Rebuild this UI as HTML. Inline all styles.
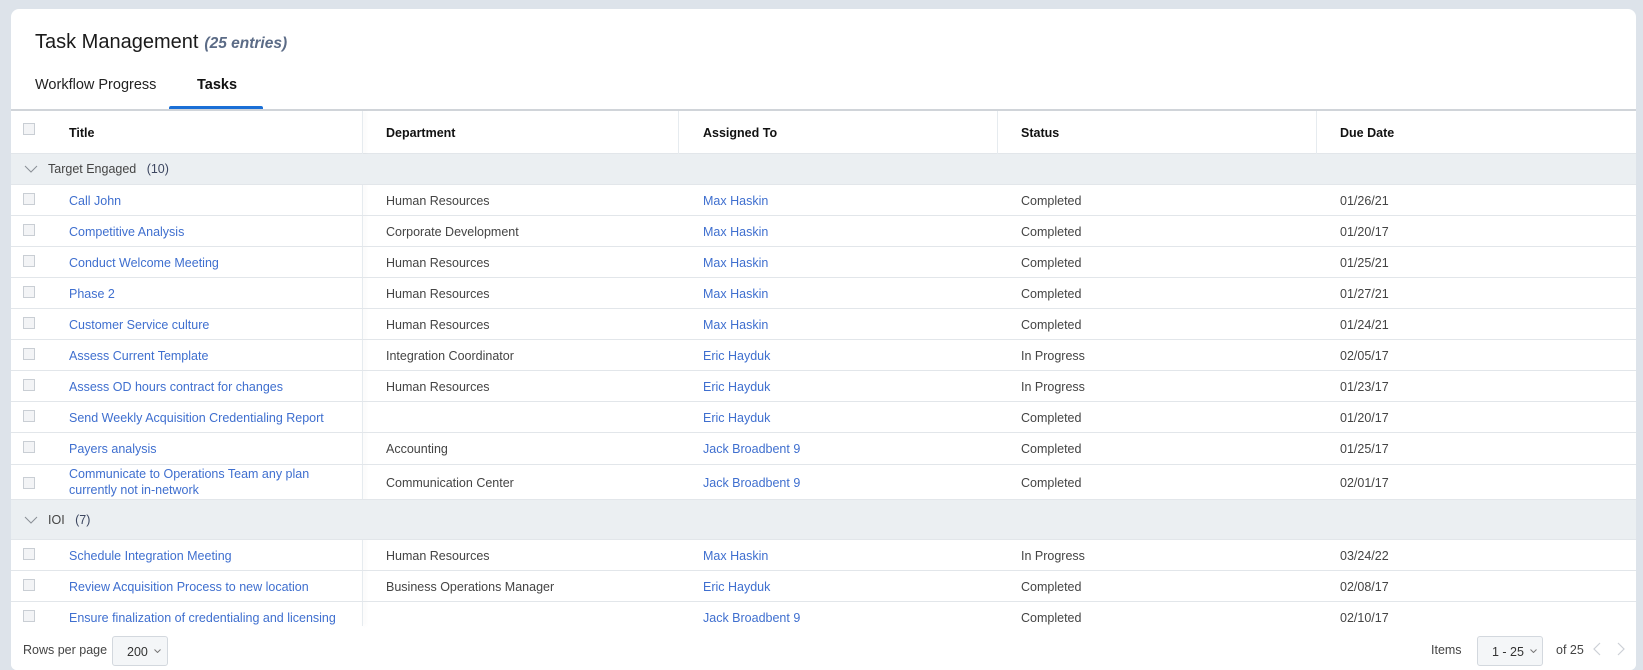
<!DOCTYPE html>
<html><head><meta charset="utf-8"><style>
*{margin:0;padding:0;box-sizing:border-box}
body{width:1643px;height:670px;background:#dde3ea;font-family:"Liberation Sans",Arial,sans-serif;position:relative;overflow:hidden;color:#444}
.card{position:absolute;left:11px;top:9px;width:1625px;height:661px;background:#fff;border-radius:8px 8px 6px 6px;overflow:hidden}
.abs{position:absolute}
.h1{left:24px;top:22px;font-size:20px;color:#1a1a1a}
.h1 i{font-size:15.5px;color:#5b6b86;font-weight:bold;margin-left:6px}
.tab{top:68px;font-size:14.5px;color:#222}
.ul{left:158px;top:97px;width:94px;height:4px;background:#1a6fd6;border-radius:2px 2px 0 0}
.hl{left:0;top:100px;width:1625px;height:2px;background:#d0d4d9}
.row{position:absolute;left:0;width:1625px;border-bottom:1px solid #e2e6ea;font-size:12.5px}
.row span{position:absolute}
.cb{position:absolute;left:12px;width:12px;height:12px;border:1px solid #c9ced4;background:#f3f4f6}
.c1{left:58px}.c2{left:375px}.c3{left:692px}.c4{left:1010px}.c5{left:1329px}
.lnk{color:#3f6fcf}
.grp{background:#ebeff2}
.vb{position:absolute;top:102px;width:1px;background:#e6ebef}
.hd{font-weight:bold;color:#111;font-size:12.5px}
.foot{position:absolute;left:0;top:621px;width:1625px;height:40px;background:#fff;font-size:12.5px;color:#444}
.sel{position:absolute;border:1px solid #d3d8de;background:#f4f6f8;border-radius:3px;font-size:12.5px;color:#333}
.chev{position:absolute;left:13px}
</style></head><body>
<div class="card">
<div class="abs h1">Task Management<i>(25 entries)</i></div>
<div class="abs tab" style="left:24px">Workflow Progress</div>
<div class="abs tab" style="left:186px;font-weight:bold;color:#111">Tasks</div>
<div class="abs ul"></div>
<div class="abs hl"></div>

<div class="row" style="top:102px;height:43px"><div class="cb" style="top:12px"></div><span class="hd c1" style="top:15px">Title</span><span class="hd c2" style="top:15px">Department</span><span class="hd c3" style="top:15px">Assigned To</span><span class="hd c4" style="top:15px">Status</span><span class="hd c5" style="top:15px">Due Date</span></div>
<div class="vb" style="left:351px;height:515px;box-shadow:2px 0 4px rgba(0,0,0,.08)"></div>
<div class="vb" style="left:667px;height:43px"></div>
<div class="vb" style="left:986px;height:43px"></div>
<div class="vb" style="left:1305px;height:43px"></div>

<div class="row grp" style="top:145px;height:31px"><svg class="chev" style="top:11px" width="14" height="8"><polyline points="1,1 7,7 13,1" fill="none" stroke="#8a8f96" stroke-width="1"/></svg><span style="left:37px;top:8px;color:#444">Target Engaged &nbsp;&nbsp;<span style="position:static;color:#3c4660">(10)</span></span></div>

<div class="row" style="top:176px;height:31px"><div class="cb" style="top:8px"></div><span class="c1 lnk" style="top:9px">Call John</span><span class="c2" style="top:9px">Human Resources</span><span class="c3 lnk" style="top:9px">Max Haskin</span><span class="c4" style="top:9px">Completed</span><span class="c5" style="top:9px">01/26/21</span></div>
<div class="row" style="top:207px;height:31px"><div class="cb" style="top:8px"></div><span class="c1 lnk" style="top:9px">Competitive Analysis</span><span class="c2" style="top:9px">Corporate Development</span><span class="c3 lnk" style="top:9px">Max Haskin</span><span class="c4" style="top:9px">Completed</span><span class="c5" style="top:9px">01/20/17</span></div>
<div class="row" style="top:238px;height:31px"><div class="cb" style="top:8px"></div><span class="c1 lnk" style="top:9px">Conduct Welcome Meeting</span><span class="c2" style="top:9px">Human Resources</span><span class="c3 lnk" style="top:9px">Max Haskin</span><span class="c4" style="top:9px">Completed</span><span class="c5" style="top:9px">01/25/21</span></div>
<div class="row" style="top:269px;height:31px"><div class="cb" style="top:8px"></div><span class="c1 lnk" style="top:9px">Phase 2</span><span class="c2" style="top:9px">Human Resources</span><span class="c3 lnk" style="top:9px">Max Haskin</span><span class="c4" style="top:9px">Completed</span><span class="c5" style="top:9px">01/27/21</span></div>
<div class="row" style="top:300px;height:31px"><div class="cb" style="top:8px"></div><span class="c1 lnk" style="top:9px">Customer Service culture</span><span class="c2" style="top:9px">Human Resources</span><span class="c3 lnk" style="top:9px">Max Haskin</span><span class="c4" style="top:9px">Completed</span><span class="c5" style="top:9px">01/24/21</span></div>
<div class="row" style="top:331px;height:31px"><div class="cb" style="top:8px"></div><span class="c1 lnk" style="top:9px">Assess Current Template</span><span class="c2" style="top:9px">Integration Coordinator</span><span class="c3 lnk" style="top:9px">Eric Hayduk</span><span class="c4" style="top:9px">In Progress</span><span class="c5" style="top:9px">02/05/17</span></div>
<div class="row" style="top:362px;height:31px"><div class="cb" style="top:8px"></div><span class="c1 lnk" style="top:9px">Assess OD hours contract for changes</span><span class="c2" style="top:9px">Human Resources</span><span class="c3 lnk" style="top:9px">Eric Hayduk</span><span class="c4" style="top:9px">In Progress</span><span class="c5" style="top:9px">01/23/17</span></div>
<div class="row" style="top:393px;height:31px"><div class="cb" style="top:8px"></div><span class="c1 lnk" style="top:9px">Send Weekly Acquisition Credentialing Report</span><span class="c3 lnk" style="top:9px">Eric Hayduk</span><span class="c4" style="top:9px">Completed</span><span class="c5" style="top:9px">01/20/17</span></div>
<div class="row" style="top:424px;height:32px"><div class="cb" style="top:8px"></div><span class="c1 lnk" style="top:9px">Payers analysis</span><span class="c2" style="top:9px">Accounting</span><span class="c3 lnk" style="top:9px">Jack Broadbent 9</span><span class="c4" style="top:9px">Completed</span><span class="c5" style="top:9px">01/25/17</span></div>
<div class="row" style="top:456px;height:35px"><div class="cb" style="top:12px"></div><span class="c1 lnk" style="top:1px;line-height:16px">Communicate to Operations Team any plan<br>currently not in-network</span><span class="c2" style="top:11px">Communication Center</span><span class="c3 lnk" style="top:11px">Jack Broadbent 9</span><span class="c4" style="top:11px">Completed</span><span class="c5" style="top:11px">02/01/17</span></div>

<div class="row grp" style="top:491px;height:40px"><svg class="chev" style="top:16px" width="14" height="8"><polyline points="1,1 7,7 13,1" fill="none" stroke="#8a8f96" stroke-width="1"/></svg><span style="left:37px;top:13px;color:#444">IOI &nbsp;&nbsp;<span style="position:static;color:#3c4660">(7)</span></span></div>

<div class="row" style="top:531px;height:31px"><div class="cb" style="top:8px"></div><span class="c1 lnk" style="top:9px">Schedule Integration Meeting</span><span class="c2" style="top:9px">Human Resources</span><span class="c3 lnk" style="top:9px">Max Haskin</span><span class="c4" style="top:9px">In Progress</span><span class="c5" style="top:9px">03/24/22</span></div>
<div class="row" style="top:562px;height:31px"><div class="cb" style="top:8px"></div><span class="c1 lnk" style="top:9px">Review Acquisition Process to new location</span><span class="c2" style="top:9px">Business Operations Manager</span><span class="c3 lnk" style="top:9px">Eric Hayduk</span><span class="c4" style="top:9px">Completed</span><span class="c5" style="top:9px">02/08/17</span></div>
<div class="row" style="top:593px;height:31px;border:none"><div class="cb" style="top:8px"></div><span class="c1 lnk" style="top:9px">Ensure finalization of credentialing and licensing</span><span class="c3 lnk" style="top:9px">Jack Broadbent 9</span><span class="c4" style="top:9px">Completed</span><span class="c5" style="top:9px">02/10/17</span></div>

<div class="foot">
<span class="abs" style="left:12px;top:13px">Rows per page</span>
<div class="sel" style="left:101px;top:6px;width:56px;height:30px"><span class="abs" style="left:14px;top:8px">200</span><svg class="abs" style="left:41px;top:12px" width="7" height="4"><polyline points="0.5,0.5 3.5,3.5 6.5,0.5" fill="none" stroke="#777" stroke-width="1"/></svg></div>
<span class="abs" style="left:1420px;top:13px">Items</span>
<div class="sel" style="left:1466px;top:6px;width:66px;height:30px"><span class="abs" style="left:14px;top:8px">1 - 25</span><svg class="abs" style="left:52px;top:12px" width="7" height="4"><polyline points="0.5,0.5 3.5,3.5 6.5,0.5" fill="none" stroke="#777" stroke-width="1"/></svg></div>
<span class="abs" style="left:1545px;top:13px">of 25</span>
<svg class="abs" style="left:1582px;top:12px" width="8" height="14"><polyline points="7,1 1,7 7,13" fill="none" stroke="#ccd0d6" stroke-width="1.2"/></svg>
<svg class="abs" style="left:1606px;top:12px" width="8" height="14"><polyline points="1,1 7,7 1,13" fill="none" stroke="#ccd0d6" stroke-width="1.2"/></svg>
</div>
</div>
</body></html>
